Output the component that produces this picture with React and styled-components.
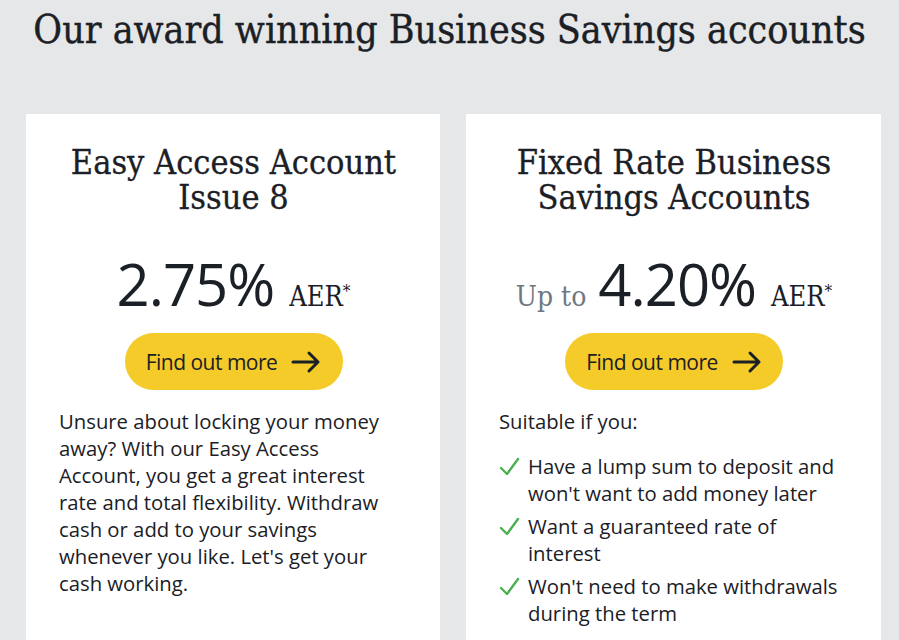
import styled, { createGlobalStyle } from 'styled-components';

const Global = createGlobalStyle`
  html, body { margin: 0; padding: 0; background: #e6e7e8; }
  body { font-family: 'Open Sans', 'Noto Sans', sans-serif; color: #1b2026; }
`;

const Page = styled.div`
  width: 899px;
  height: 640px;
  overflow: hidden;
  background: #e6e7e8;
`;

const Title = styled.h1`
  margin: 0;
  padding-top: 6px;
  text-align: center;
  font-family: 'DejaVu Serif Condensed', 'DejaVu Serif', serif;
  font-weight: 400;
  font-size: 39px;
  line-height: 48px;
  color: #1b2026;
  -webkit-text-stroke: 0.4px #1b2026;
`;

const Cards = styled.div`
  display: grid;
  grid-template-columns: 414px 415px;
  gap: 26px;
  padding-left: 26px;
  margin-top: 60px;
`;

const Card = styled.div`
  background: #fff;
  height: 560px;
  padding: 31px 32px 0 33px;
  box-sizing: border-box;
  display: flex;
  flex-direction: column;
  align-items: center;
`;

const Heading = styled.h2`
  margin: 0;
  text-align: center;
  font-family: 'DejaVu Serif Condensed', 'DejaVu Serif', serif;
  font-weight: 400;
  font-size: 34px;
  line-height: 35px;
  -webkit-text-stroke: 0.3px #1b2026;
`;

const Rate = styled.div`
  display: flex;
  align-items: baseline;
  margin-top: 37px;
  height: 64px;
`;

const Prefix = styled.span`
  font-family: 'DejaVu Serif Condensed', 'DejaVu Serif', serif;
  font-size: 28px;
  color: #6f7880;
  margin-right: 12px;
`;

const Value = styled.span`
  font-family: 'Open Sans', sans-serif;
  font-size: 58px;
  line-height: 64px;
  letter-spacing: -1px;
`;

const Aer = styled.span`
  font-family: 'DejaVu Serif Condensed', 'DejaVu Serif', serif;
  font-size: 27px;
  margin-left: 15px;
  sup {
    font-size: 17px;
    vertical-align: 9px;
  }
`;

const Button = styled.a`
  display: flex;
  align-items: center;
  gap: 14px;
  margin-top: 17px;
  width: 218px;
  height: 57px;
  box-sizing: border-box;
  justify-content: center;
  background: #f5cb2a;
  border-radius: 29px;
  font-size: 21px;
  letter-spacing: -0.5px;
  color: #1b2026;
  text-decoration: none;
`;

const Text = styled.p`
  align-self: stretch;
  max-width: ${(p) => p.$width || 'none'};
  margin: 18px 0 0;
  font-size: 20.3px;
  line-height: 27px;
`;

const List = styled.ul`
  align-self: stretch;
  list-style: none;
  margin: 18px 0 0;
  padding: 0;
  display: flex;
  flex-direction: column;
  gap: 6px;
`;

const Item = styled.li`
  display: flex;
  gap: 8px;
  font-size: 20.3px;
  line-height: 27px;
  svg { flex-shrink: 0; }
`;

const Arrow = () => (
  <svg width="30" height="24" viewBox="0 0 30 24" fill="none" stroke="#1b2026" strokeWidth="3" strokeLinecap="round" strokeLinejoin="round">
    <path d="M2 12h25M18 3l9 9-9 9" />
  </svg>
);

const Check = () => (
  <svg width="21" height="27" viewBox="0 0 21 27" fill="none" stroke="#4caf50" strokeWidth="2.4" strokeLinecap="round" strokeLinejoin="round">
    <path d="M2 15l6 6L19 6" />
  </svg>
);

export default function App() {
  return (
    <Page>
      <Global />
      <Title>Our award winning Business Savings accounts</Title>
      <Cards>
        <Card>
          <Heading>Easy Access Account<br />Issue 8</Heading>
          <Rate>
            <Value>2.75%</Value>
            <Aer>AER<sup>*</sup></Aer>
          </Rate>
          <Button href="#">Find out more <Arrow /></Button>
          <Text $width="330px">
            Unsure about locking your money away? With our Easy Access Account, you get a great interest rate and total flexibility. Withdraw cash or add to your savings whenever you like. Let's get your cash working.
          </Text>
        </Card>
        <Card>
          <Heading>Fixed Rate Business<br />Savings Accounts</Heading>
          <Rate>
            <Prefix>Up to</Prefix>
            <Value>4.20%</Value>
            <Aer>AER<sup>*</sup></Aer>
          </Rate>
          <Button href="#">Find out more <Arrow /></Button>
          <Text>Suitable if you:</Text>
          <List>
            <Item><Check /><span>Have a lump sum to deposit and won't want to add money later</span></Item>
            <Item><Check /><span>Want a guaranteed rate of interest</span></Item>
            <Item><Check /><span>Won't need to make withdrawals during the term</span></Item>
          </List>
        </Card>
      </Cards>
    </Page>
  );
}
